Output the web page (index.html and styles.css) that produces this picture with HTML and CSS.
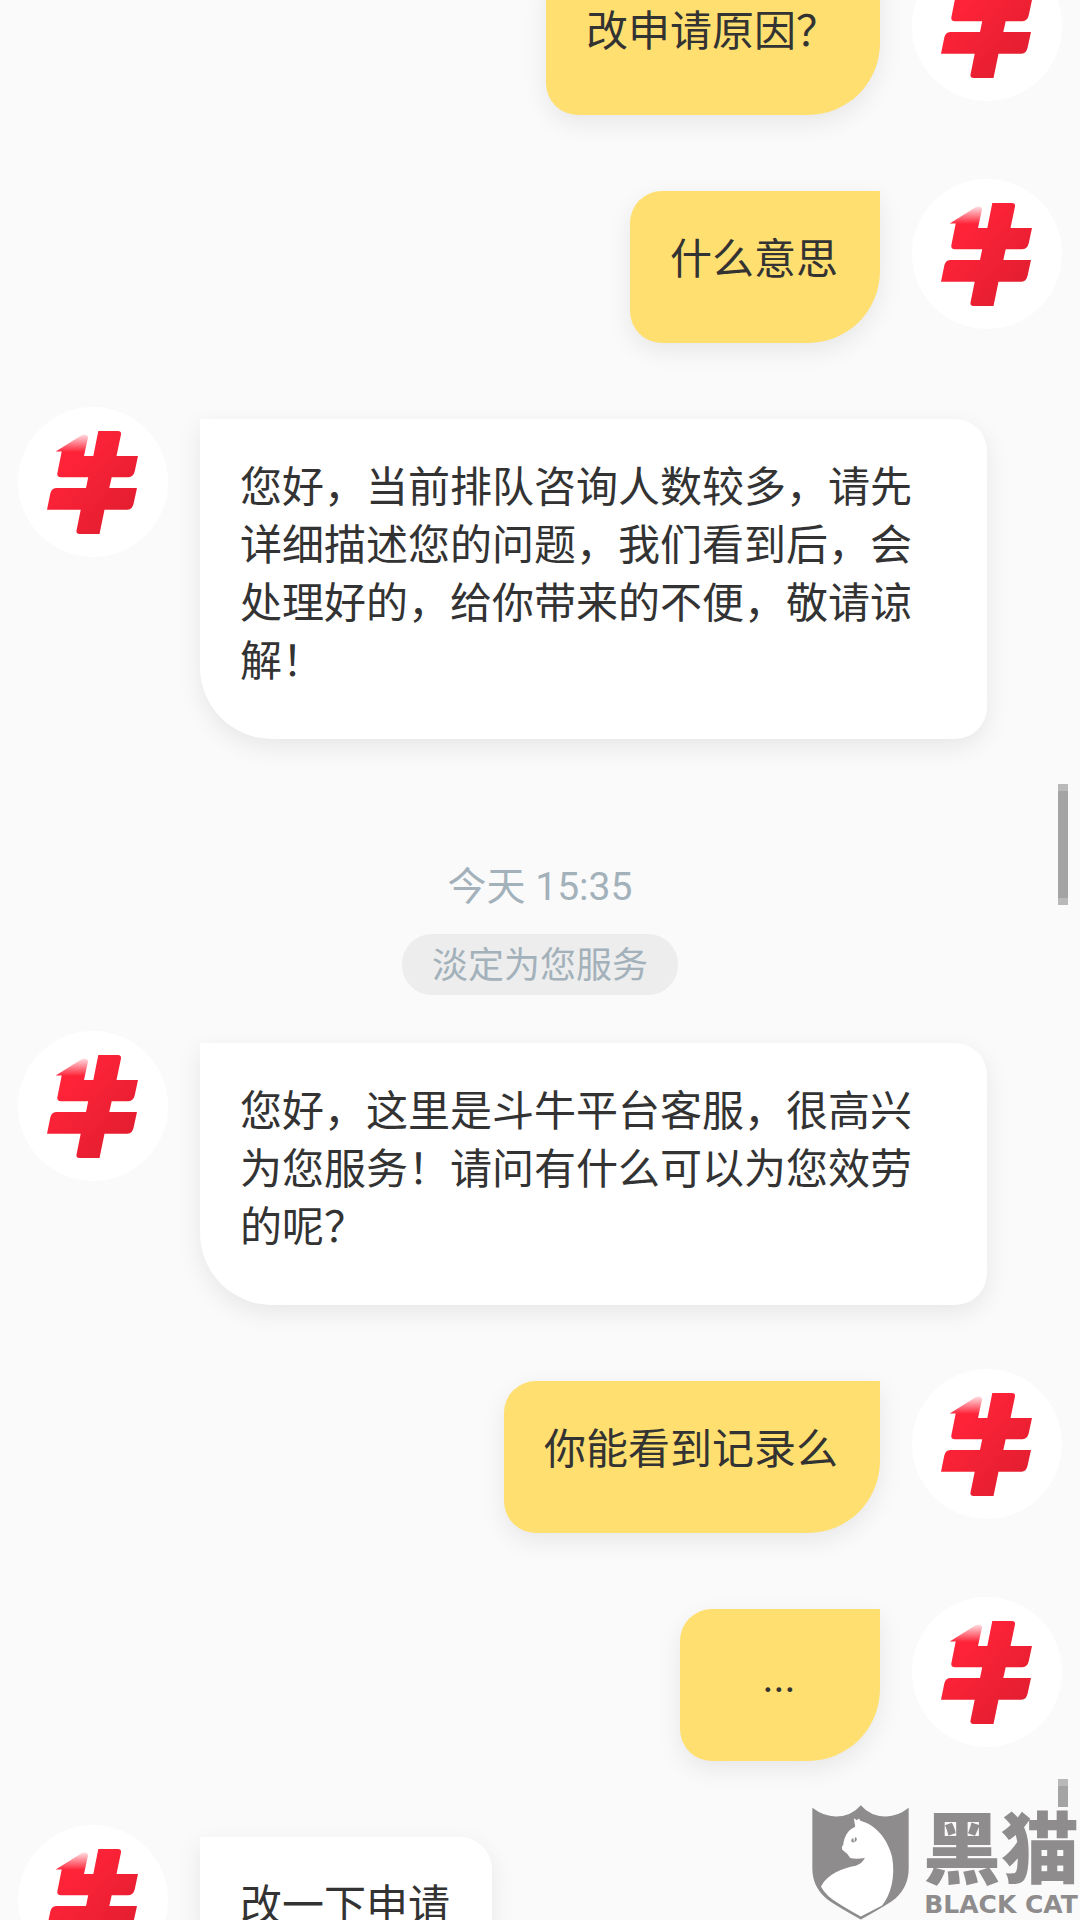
FILE: index.html
```html
<!DOCTYPE html>
<html lang="zh-CN">
<head>
<meta charset="utf-8">
<meta name="viewport" content="width=device-width, initial-scale=1">
<title>在线客服</title>
<link rel="stylesheet" href="styles.css">
</head>
<body>
<svg class="defs" aria-hidden="true">
  <defs>
    <linearGradient id="red" x1="0" y1="0" x2="1" y2="1">
      <stop offset="0.25" stop-color="#ff2338"/>
      <stop offset="0.85" stop-color="#e31e30"/>
    </linearGradient>
    <linearGradient id="fade" x1="0" y1="0" x2="0" y2="1">
      <stop offset="0" stop-color="#fff" stop-opacity="0.9"/>
      <stop offset="1" stop-color="#fff" stop-opacity="0"/>
    </linearGradient>
    <symbol id="bull" viewBox="0 0 150 150">
      <path fill="url(#red)" d="M80.3 24H100Q103.400 24 103 27.500L98.500 49H120L116.800 64Q115.500 70 110.500 70.300H93.700L91.300 81H119L115.500 97Q114.300 102.500 109.500 102.700H86.500L81.500 127H61.500Q58 127 58.500 123.500L62.700 102.700H29L32.300 86.500Q33.500 81.300 38 81H68L70.200 70.300H43Q39 70.300 39.300 66.500L43.700 44.500H37.700L64 28Q69.500 26 70 30.500L66 49H75.300Z"/>
      <path fill="url(#fade)" d="M36 45L64 27Q70.500 25 71 30.500L68 45Z"/>
    </symbol>
  </defs>
</svg>
<div class="screen">
  <main class="chat">
    <article class="row row-out">
      <svg class="avatar" role="img" aria-label="头像"><use href="#bull"/></svg>
      <p class="bubble">改申请原因？</p>
    </article>
    <article class="row row-out">
      <svg class="avatar" role="img" aria-label="头像"><use href="#bull"/></svg>
      <p class="bubble">什么意思</p>
    </article>
    <article class="row row-in">
      <svg class="avatar" role="img" aria-label="客服头像"><use href="#bull"/></svg>
      <p class="bubble">您好，当前排队咨询人数较多，请先详细描述您的问题，我们看到后，会处理好的，给你带来的不便，敬请谅解！</p>
    </article>
    <div class="notice">
      <time class="time">今天 15:35</time>
      <span class="agent">淡定为您服务</span>
    </div>
    <article class="row row-in">
      <svg class="avatar" role="img" aria-label="客服头像"><use href="#bull"/></svg>
      <p class="bubble">您好，这里是斗牛平台客服，很高兴为您服务！请问有什么可以为您效劳的呢？</p>
    </article>
    <article class="row row-out">
      <svg class="avatar" role="img" aria-label="头像"><use href="#bull"/></svg>
      <p class="bubble">你能看到记录么</p>
    </article>
    <article class="row row-out">
      <svg class="avatar" role="img" aria-label="头像"><use href="#bull"/></svg>
      <p class="bubble">...</p>
    </article>
    <article class="row row-in">
      <svg class="avatar" role="img" aria-label="客服头像"><use href="#bull"/></svg>
      <p class="bubble">改一下申请</p>
    </article>
  </main>
  <div class="thumb thumb-main"></div>
  <div class="thumb thumb-end"></div>
  <div class="watermark">
    <svg class="shield" viewBox="93 105 292 345" aria-hidden="true">
      <path fill="#8e8c8d" d="M94 113Q130 140 166 139Q212 138 240 105Q268 138 314 139Q350 140 384 113V295Q384 350 345 385Q325 402 240 449Q155 402 135 385Q94 350 94 295Z"/>
      <path fill="#fff" d="M219 144L228 150L234 145L239 152C285 165 320 205 334 260C345 320 330 375 304 407L240 440Q160 395 142 378Q127 365 120 350C140 310 185 295 225 287Q245 280 252 264Q225 268 208 264Q200 250 185 240Q180 232 187 224C190 200 200 180 223 170Z"/>
      <path fill="#8e8c8d" d="M212 216Q209 208 217 203L219 217ZM223 201Q231 206 226 213L220 217Z"/>
    </svg>
    <div class="brand">
      <span class="brand-cn">黑猫</span>
      <span class="brand-en">BLACK CAT</span>
    </div>
  </div>
</div>
</body>
</html>
```
FILE: styles.css
```css
* {
  box-sizing: border-box;
}

body {
  margin: 0;
  background: #fafafa;
  color: #333;
  font-family: Roboto, "Noto Sans CJK SC", sans-serif;
}

.defs {
  position: absolute;
  width: 0;
  height: 0;
}

.screen {
  position: relative;
  height: 100vh;
  overflow: hidden;
}

/* The list is scrolled part of the way into its first message. */
.chat {
  display: flex;
  flex-direction: column;
  gap: 64px;
  margin-top: -49px;
}

.row {
  display: flex;
  align-items: flex-start;
  gap: 32px;
}

.row-in {
  padding: 0 93px 0 18px;
}

.row-out {
  flex-direction: row-reverse;
  padding: 0 18px 0 93px;
}

.avatar {
  flex: none;
  width: 150px;
  height: 150px;
  border-radius: 50%;
  background: #fff;
}

.bubble {
  min-width: 200px;
  min-height: 152px;
  margin: 12px 0 0;
  padding: 40px 42px 48px 40px;
  font-size: 42px;
  line-height: 58px;
  box-shadow: 0 8px 24px rgba(0, 0, 0, 0.08);
}

.row-in .bubble {
  border-radius: 0 32px 32px 72px;
  background: #fff;
}

.row-out .bubble {
  border-radius: 32px 0 72px 32px;
  background: #ffdf6f;
  text-align: center;
}

.notice {
  display: flex;
  flex-direction: column;
  align-items: center;
  gap: 22px;
  margin: 59px 0 -28px;
  color: #a3b1ba;
}

.time {
  font-size: 39px;
  line-height: 50px;
}

.agent {
  padding: 3px 30px 0;
  border-radius: 30px;
  background: #ededed;
  font-size: 36px;
  line-height: 58px;
}

.thumb {
  position: absolute;
  right: 12px;
  width: 10px;
  border: 0 solid #b9b9b9;
  background: #a4a4a4;
}

.thumb-main {
  top: 784px;
  height: 121px;
  border-width: 7px 0;
}

.thumb-end {
  top: 1779px;
  height: 28px;
  border-top-width: 7px;
}

.watermark {
  position: absolute;
  right: 1px;
  bottom: 0;
  display: flex;
  align-items: flex-end;
  gap: 14px;
  color: #8e8c8d;
}

.shield {
  width: 97px;
  height: 115px;
}

.brand {
  display: flex;
  flex-direction: column;
  align-items: center;
  gap: 6px;
}

.brand-cn {
  font-family: "Noto Sans CJK SC", sans-serif;
  font-size: 78px;
  font-weight: 900;
  line-height: 80px;
}

.brand-en {
  font-family: "DejaVu Sans", sans-serif;
  font-size: 25px;
  font-weight: 700;
  line-height: 30px;
}
```
